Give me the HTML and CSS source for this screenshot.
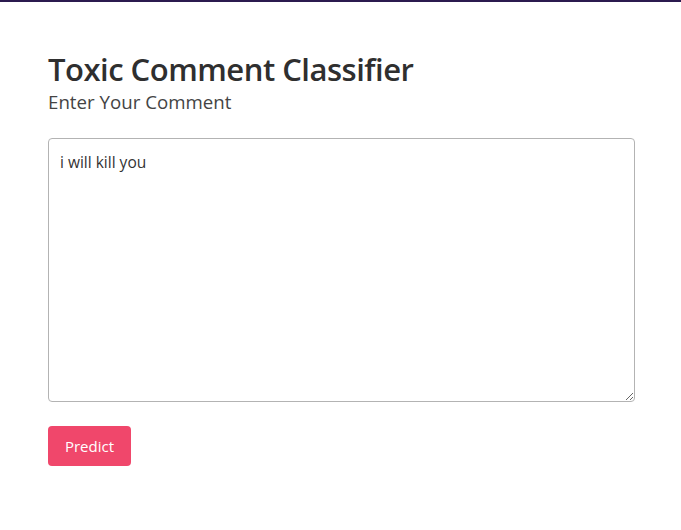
FILE: index.html
```html
<!DOCTYPE html>
<html>
<head>
<meta charset="utf-8">
<link rel="stylesheet" href="styles.css">
</head>
<body>
<div class="topbar"></div>
<main class="container">
  <h1 class="title">Toxic Comment Classifier</h1>
  <p class="subtitle">Enter Your Comment</p>
  <form class="form">
    <textarea class="comment">i will kill you</textarea>
    <button type="button" class="btn">Predict</button>
  </form>
</main>
</body>
</html>
```
FILE: styles.css
```css
html, body {
  margin: 0;
  padding: 0;
  background: #fff;
}
body {
  font-family: "Open Sans", "Noto Sans", sans-serif;
  color: #333;
}
.topbar {
  height: 2px;
  background: #2b1a4f;
}
.container {
  padding: 48px 46px 0 48px;
  display: flex;
  flex-direction: column;
}
.title {
  margin: 0;
  font-size: 31px;
  font-weight: 600;
  line-height: 38px;
  color: #2f2f2f;
  letter-spacing: -0.5px;
}
.subtitle {
  margin: 1px 0 0;
  font-size: 18.7px;
  line-height: 26px;
  color: #444;
}
.form {
  display: flex;
  flex-direction: column;
  align-items: flex-start;
  margin-top: 23px;
  gap: 24px;
}
.comment {
  box-sizing: border-box;
  width: 100%;
  height: 264px;
  border: 1px solid #b3b3b3;
  border-radius: 4px;
  padding: 12px 11px;
  font-family: "Open Sans", "Noto Sans", sans-serif;
  font-size: 15.5px;
  color: #333;
  resize: vertical;
  outline: none;
}
.btn {
  height: 40px;
  width: 83px;
  border: none;
  border-radius: 4px;
  background: #f0476b;
  color: #fff;
  font-family: "Open Sans", "Noto Sans", sans-serif;
  font-size: 15px;
  cursor: pointer;
}
```
